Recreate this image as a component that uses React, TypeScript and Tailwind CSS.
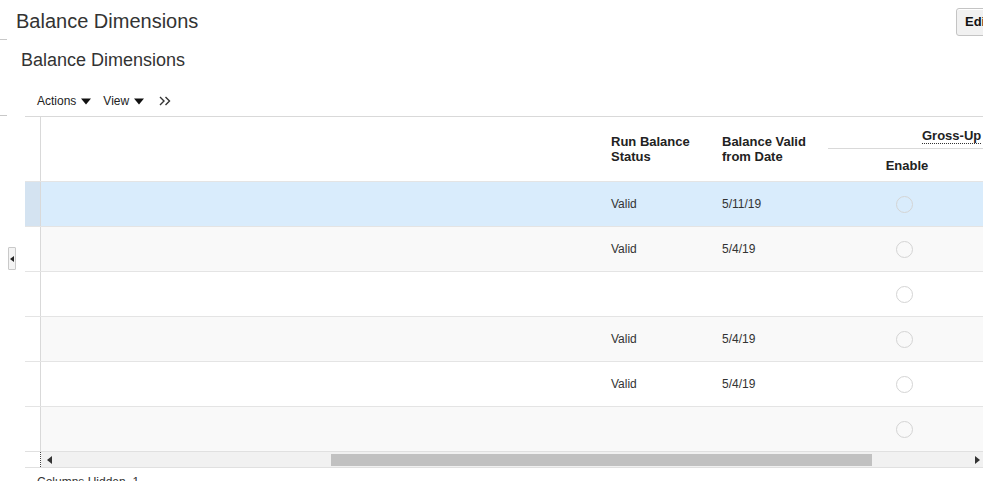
import React from 'react';

type Row = {
  status: string;
  date: string;
};

const ROWS: Row[] = [
  { status: 'Valid', date: '5/11/19' },
  { status: 'Valid', date: '5/4/19' },
  { status: '', date: '' },
  { status: 'Valid', date: '5/4/19' },
  { status: 'Valid', date: '5/4/19' },
  { status: '', date: '' },
];

const FONT = "font-['Liberation_Sans',Arial,sans-serif]";

function Caret() {
  return (
    <svg width="10" height="7" viewBox="0 0 10 7" className="ml-[5px] mt-[1px]">
      <path d="M0 0.5 L10 0.5 L5 6.5 Z" fill="#111" />
    </svg>
  );
}

function Radio() {
  return <span className="block h-[17px] w-[17px] rounded-full border border-[#d4d4d4] bg-transparent" />;
}

export default function App() {
  return (
    <div className={`relative h-[481px] w-[983px] overflow-hidden bg-white text-[#333] ${FONT}`}>
      {/* splitter decorations on the left edge */}
      <div className="absolute left-0 top-[39px] h-px w-[7px] bg-[#c8c8c8]" />
      <div className="absolute left-0 top-[115px] h-px w-[7px] bg-[#c8c8c8]" />
      <div className="absolute left-[8px] top-[247px] flex h-[23px] w-[8px] items-center justify-center rounded-[1px] border border-[#c9c9c9] bg-[#f4f4f4]">
        <svg width="4" height="6" viewBox="0 0 4 6">
          <path d="M4 0 L0 3 L4 6 Z" fill="#222" />
        </svg>
      </div>

      <div className="w-[1040px]">
        <div className="flex items-start justify-between">
          <h1 className="pl-[16px] pt-[9px] text-[20px] leading-[24px] text-[#333]">Balance Dimensions</h1>
          <button
            type="button"
            className="mt-[8px] h-[28px] w-[84px] shrink-0 rounded-[3px] border border-[#c4c4c4] bg-[#f1f1f1] pl-[8px] text-left text-[13px] font-bold text-[#111] shadow-[inset_0_1px_0_#fff]"
          >
            Edit
          </button>
        </div>

        <h2 className="pl-[21px] pt-[13px] text-[18px] leading-[22px] text-[#333]">Balance Dimensions</h2>

        <div className="flex h-[38px] items-center pl-[37px] pt-[22px] text-[12px] text-[#222]">
          <span className="flex items-center">
            Actions
            <Caret />
          </span>
          <span className="ml-[12px] flex items-center">
            View
            <Caret />
          </span>
          <svg width="12" height="10" viewBox="0 0 12 10" className="ml-[15px]" fill="none" stroke="#333" strokeWidth="1.4">
            <path d="M1 1 L5 5 L1 9" />
            <path d="M6.5 1 L10.5 5 L6.5 9" />
          </svg>
        </div>

        {/* table */}
        <div className="ml-[25px] mt-[7px] border-t border-[#d9d9d9]">
          {/* header */}
          <div className="flex h-[64px]">
            <div className="w-[16px] shrink-0 border-r border-[#d9d9d9]" />
            <div className="w-[559px] shrink-0" />
            <div className="w-[111px] shrink-0 pl-[11px] pt-[17px] text-[13px] font-bold leading-[15px] text-[#222]">
              Run Balance
              <br />
              Status
            </div>
            <div className="w-[117px] shrink-0 pl-[11px] pt-[17px] text-[13px] font-bold leading-[15px] text-[#222]">
              Balance Valid
              <br />
              from Date
            </div>
            <div className="flex w-[280px] shrink-0 flex-col">
              <div className="h-[32px] border-b border-[#d9d9d9] pl-[94px] pt-[6px]">
                <span className="border-b border-dotted border-[#333] text-[13px] font-bold leading-[15px] text-[#222]">
                  Gross-Up
                </span>
              </div>
              <div className="flex w-[156px] flex-1 items-center justify-center pl-[2px] pt-[1px] text-[13px] font-bold text-[#222]">
                Enable
              </div>
            </div>
          </div>

          {/* body */}
          {ROWS.map((row, i) => {
            const selected = i === 0;
            const striped = i % 2 === 1;
            const bg = selected ? 'bg-[#d9ecfc]' : striped ? 'bg-[#f9f9f9]' : 'bg-white';
            return (
              <div key={i} className="flex h-[45px] border-t border-[#e4e4e4]">
                <div
                  className={`w-[16px] shrink-0 border-r border-[#d9d9d9] ${selected ? 'bg-[#d4e3f1]' : 'bg-white'}`}
                />
                <div className={`flex flex-1 items-center text-[12px] text-[#333] ${bg}`}>
                  <div className="w-[559px] shrink-0" />
                  <div className="w-[111px] shrink-0 pl-[11px]">{row.status}</div>
                  <div className="w-[117px] shrink-0 pl-[11px]">{row.date}</div>
                  <div className="flex w-[156px] shrink-0 justify-center pr-[3px]">
                    <Radio />
                  </div>
                </div>
              </div>
            );
          })}

          {/* horizontal scrollbar */}
          <div className="flex h-[17px] border-y border-[#e0e0e0]">
            <div className="w-[16px] shrink-0 border-r border-dotted border-[#444] bg-white" />
            <div className="relative w-[942px] shrink-0 bg-[#f1f1f1]">
              <svg width="5" height="8" viewBox="0 0 5 8" className="absolute left-[6px] top-[4px]">
                <path d="M5 0 L0 4 L5 8 Z" fill="#333" />
              </svg>
              <div className="absolute left-[290px] top-[2px] h-[12px] w-[541px] bg-[#c1c1c1]" />
              <svg width="5" height="8" viewBox="0 0 5 8" className="absolute left-[934px] top-[4px]">
                <path d="M0 0 L5 4 L0 8 Z" fill="#333" />
              </svg>
            </div>
          </div>
        </div>

        <div className="pl-[37px] pt-[5px] text-[12px] text-[#333]">
          Columns Hidden&nbsp;&nbsp;1
        </div>
      </div>
    </div>
  );
}
